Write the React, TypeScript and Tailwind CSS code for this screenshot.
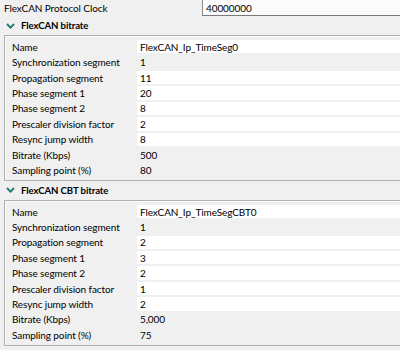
import React from 'react';

type Row = { label: string; value: string; editable: boolean };

const bitrate: Row[] = [
  { label: 'Name', value: 'FlexCAN_Ip_TimeSeg0', editable: true },
  { label: 'Synchronization segment', value: '1', editable: false },
  { label: 'Propagation segment', value: '11', editable: true },
  { label: 'Phase segment 1', value: '20', editable: true },
  { label: 'Phase segment 2', value: '8', editable: true },
  { label: 'Prescaler division factor', value: '2', editable: true },
  { label: 'Resync jump width', value: '8', editable: true },
  { label: 'Bitrate (Kbps)', value: '500', editable: false },
  { label: 'Sampling point (%)', value: '80', editable: false },
];

const cbtBitrate: Row[] = [
  { label: 'Name', value: 'FlexCAN_Ip_TimeSegCBT0', editable: true },
  { label: 'Synchronization segment', value: '1', editable: false },
  { label: 'Propagation segment', value: '2', editable: true },
  { label: 'Phase segment 1', value: '3', editable: true },
  { label: 'Phase segment 2', value: '2', editable: true },
  { label: 'Prescaler division factor', value: '1', editable: true },
  { label: 'Resync jump width', value: '2', editable: true },
  { label: 'Bitrate (Kbps)', value: '5,000', editable: false },
  { label: 'Sampling point (%)', value: '75', editable: false },
];

function Chevron() {
  return (
    <svg width="9" height="6" viewBox="0 0 9 6" className="shrink-0">
      <path d="M1 1 L4.5 4.6 L8 1" fill="none" stroke="#237f72" strokeWidth="2" />
    </svg>
  );
}

function Section({ title, rows }: { title: string; rows: Row[] }) {
  return (
    <>
      <div className="h-[19px] flex items-center gap-[6px] pl-[6px]">
        <Chevron />
        <span className="font-bold text-[9.6px] text-black">{title}</span>
      </div>
      <div className="ml-[4px] border border-[#b0b0b0] shadow-[inset_1px_1px_0_#fbfbfb] pt-[3px] pb-[2px]">
        {rows.map((r) => (
          <div key={r.label} className="h-[15.43px] flex items-stretch">
            <div className="w-[132px] pl-[7px] flex items-center">{r.label}</div>
            <div
              className={
                'flex-1 my-[1px] pl-[3px] flex items-center ' + (r.editable ? 'bg-white' : '')
              }
            >
              {r.value}
            </div>
          </div>
        ))}
      </div>
    </>
  );
}

export default function App() {
  return (
    <div className="w-[400px] h-[350px] overflow-hidden bg-[#f0f0f0]">
      <div
        className="w-[412px] text-[10px] tracking-[-0.1px] text-black leading-none"
        style={{ fontFamily: 'Lato, "Noto Sans", sans-serif' }}
      >
        <div className="h-[16px] flex items-stretch">
          <div className="w-[202px] pl-[4px] flex items-center">FlexCAN Protocol Clock</div>
          <div className="flex-1 mt-[-1px] border border-[#8c8c8c] border-b-[#7a7a7a] bg-[#fbfbfb] pl-[3px] flex items-center">
            40000000
          </div>
        </div>
        <Section title="FlexCAN bitrate" rows={bitrate} />
        <Section title="FlexCAN CBT bitrate" rows={cbtBitrate} />
      </div>
    </div>
  );
}
